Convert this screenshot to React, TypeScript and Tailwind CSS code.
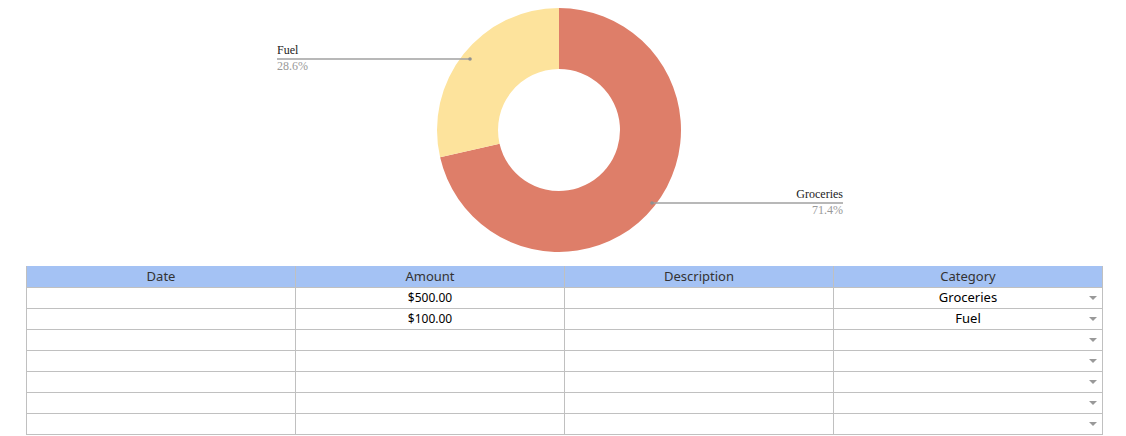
export default function App() {
  const cx = 559, cy = 130, R = 122, r = 61;
  const a = (0.714 * 2 * Math.PI);
  const ox = cx + R * Math.sin(a), oy = cy - R * Math.cos(a);
  const ix = cx + r * Math.sin(a), iy = cy - r * Math.cos(a);
  const groc = `M ${cx} ${cy - R} A ${R} ${R} 0 1 1 ${ox} ${oy} L ${ix} ${iy} A ${r} ${r} 0 1 0 ${cx} ${cy - r} Z`;
  const fuel = `M ${ox} ${oy} A ${R} ${R} 0 0 1 ${cx} ${cy - R} L ${cx} ${cy - r} A ${r} ${r} 0 0 0 ${ix} ${iy} Z`;
  const rows: [string, string][] = [["$500.00", "Groceries"], ["$100.00", "Fuel"], ["", ""], ["", ""], ["", ""], ["", ""], ["", ""]];
  const hdr = ["Date", "Amount", "Description", "Category"];
  return (
    <div className="w-[1126px] h-[436px] bg-white overflow-hidden">
      <div className="h-[266px]">
        <svg width="1126" height="266">
          <path d={groc} fill="#de7e69" />
          <path d={fuel} fill="#fde39c" />
          <line x1="277" y1="59" x2="470" y2="59" stroke="#a0a0a0" strokeWidth="1.5" />
          <circle cx="470" cy="59" r="1.8" fill="#909090" />
          <text x="277" y="54" fontFamily="Liberation Serif, serif" fontSize="12" fill="#222">Fuel</text>
          <text x="277" y="70" fontFamily="Liberation Serif, serif" fontSize="12" fill="#999">28.6%</text>
          <line x1="652" y1="203" x2="843" y2="203" stroke="#a0a0a0" strokeWidth="1.5" />
          <circle cx="652" cy="203" r="1.8" fill="#909090" />
          <text x="843" y="198" textAnchor="end" fontFamily="Liberation Serif, serif" fontSize="12" fill="#222">Groceries</text>
          <text x="843" y="214" textAnchor="end" fontFamily="Liberation Serif, serif" fontSize="12" fill="#999">71.4%</text>
        </svg>
      </div>
      <div className="ml-[26px] w-[1077px] border-l border-[#c0c0c0]">
        <div className="grid grid-cols-4 h-[22px] bg-[#a4c2f4] border-b border-[#c0c0c0]">
          {hdr.map((h) => (
            <div key={h} className="border-r border-[#c0c0c0] flex items-center justify-center text-[13px] text-[#333] font-['Open_Sans',sans-serif]">{h}</div>
          ))}
        </div>
        {rows.map(([amt, cat], i) => (
          <div key={i} className="grid grid-cols-4 h-[21px] border-b border-[#c0c0c0]">
            <div className="border-r border-[#c0c0c0]" />
            <div className="border-r border-[#c0c0c0] flex items-center justify-center text-[12px] text-black font-['DejaVu_Serif',serif]">{amt}</div>
            <div className="border-r border-[#c0c0c0]" />
            <div className="border-r border-[#c0c0c0] relative flex items-center justify-center text-[13px] text-black font-['Liberation_Serif',serif]">
              {cat}
              <svg className="absolute right-[5px] top-[8px]" width="8" height="5"><path d="M0 0 L8 0 L4 4 Z" fill="#999" /></svg>
            </div>
          </div>
        ))}
      </div>
    </div>
  );
}
